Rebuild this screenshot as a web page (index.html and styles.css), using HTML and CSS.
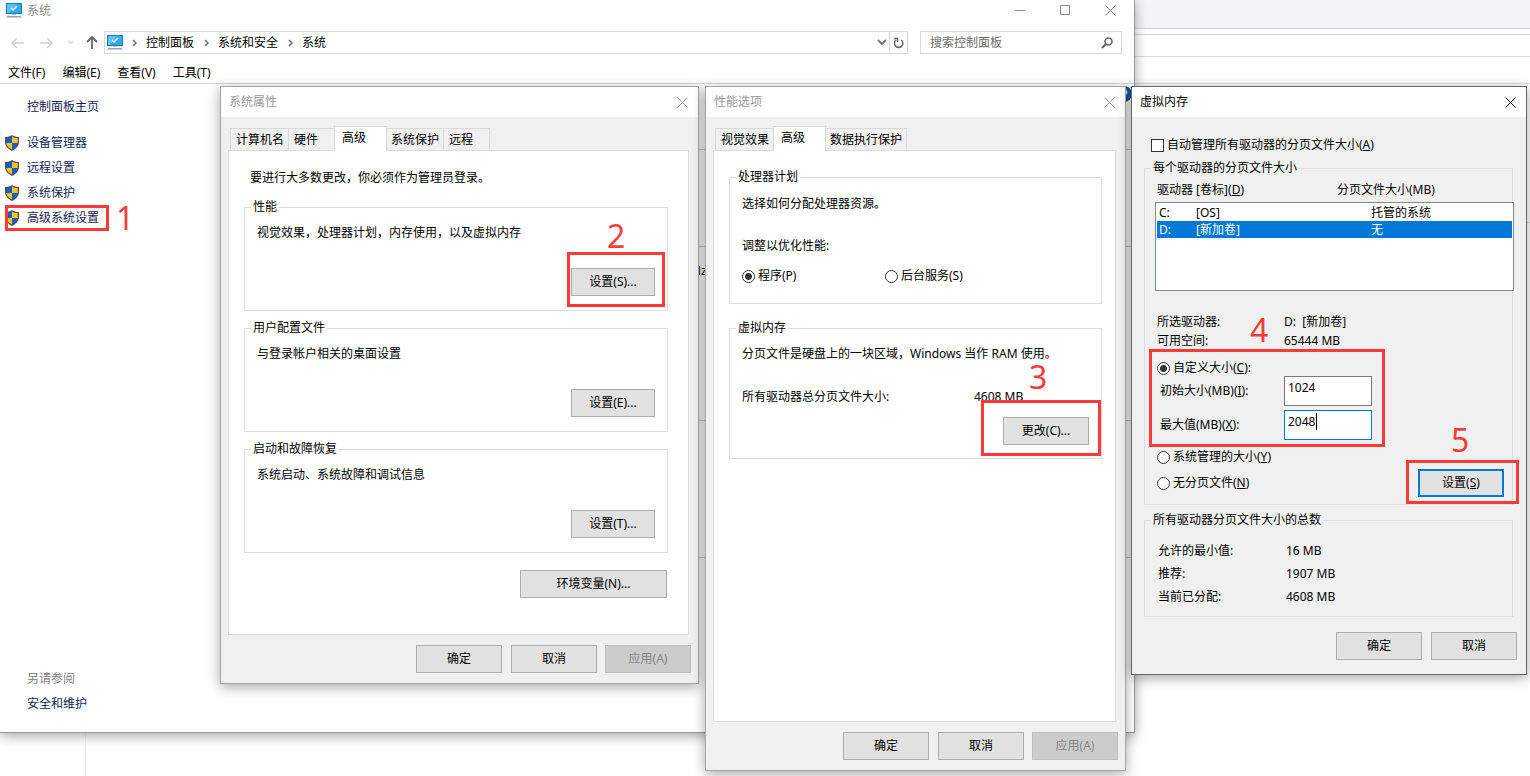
FILE: index.html
```html
<!DOCTYPE html>
<html lang="zh-CN">
<head>
    <meta charset="UTF-8" />
    <title>虚拟内存</title>
    <meta name="viewport" content="width=device-width, initial-scale=1" />
    <link rel="stylesheet" href="styles.css">
</head>
<body>
    <!-- shared icons -->
    <svg class="defs" width="0" height="0" aria-hidden="true">
        <symbol id="monitor" viewBox="0 0 16 15">
            <path d="M0 0h16v11H0z" fill="#1c7cba"/>
            <path d="M1 1h14v9H1z" fill="#2fa9f0"/>
            <path d="M1 1h9L3 10H1z" fill="#5cc3fa"/>
            <path d="M5 5l2 2 4-4" fill="none" stroke="#fff" stroke-width="1.5"/>
            <path d="M6 11h4v1H6z" fill="#b9c4cc"/>
            <path d="M1 13h14v1H1z" fill="#8fa3b1"/>
            <path d="M0 14h16v1H0z" fill="#c5d0d8"/>
        </symbol>
        <symbol id="shield" viewBox="0 0 14 16">
            <path d="M7 0C5 1.600 2.500 2 0 2v5c0 4 3 7 7 9 4-2 7-5 7-9V2C11.500 2 9 1.600 7 0z" fill="#4d4d4d"/>
            <path d="M7 1.500C5.200 2.700 3.200 3.100 1.200 3.100V8H7z" fill="#0f63c4"/>
            <path d="M7 1.500c1.800 1.200 3.800 1.600 5.800 1.600V8H7z" fill="#fdbf2d"/>
            <path d="M1.200 8H7v6.600C3.800 12.900 1.500 10.600 1.200 8z" fill="#fdbf2d"/>
            <path d="M12.800 8H7v6.600c3.200-1.700 5.500-4 5.800-6.600z" fill="#0f63c4"/>
        </symbol>
        <symbol id="close" viewBox="0 0 11 11">
            <path d="M0.500 0.500l10 10M10.500 0.500l-10 10" fill="none" stroke="currentColor"/>
        </symbol>
        <symbol id="crumb" viewBox="0 0 5 8">
            <path d="M1 1l3 3-3 3" fill="none" stroke="#6b6b6b" stroke-width="1.500"/>
        </symbol>
    </svg>

    <div class="desktop">
        <div class="browser">
            <div class="browser-tabs"></div>
            <div class="browser-address"></div>
            <div class="browser-bar"></div>
            <div class="browser-page"></div>
            <div class="browser-side"></div>
        </div>

        <!-- control panel -->
        <main class="window">
            <header class="window-title">
                <svg class="icon-monitor"><use href="#monitor"/></svg>
                <span>系统</span>
                <div class="window-controls">
                    <button type="button" aria-label="最小化"><svg width="11" height="11"><path d="M0 5.500h10" stroke="currentColor"/></svg></button>
                    <button type="button" aria-label="最大化"><svg width="11" height="11"><path d="M0.500 0.500h9v9h-9z" fill="none" stroke="currentColor"/></svg></button>
                    <button type="button" aria-label="关闭"><svg width="11" height="11"><use href="#close"/></svg></button>
                </div>
            </header>
            <div class="toolbar">
                <nav class="history">
                    <button type="button" aria-label="后退" disabled><svg width="13" height="12"><path d="M6 1L1 6l5 5M1 6h12" fill="none" stroke="#d0d0d0" stroke-width="1.500"/></svg></button>
                    <button type="button" aria-label="前进" disabled><svg width="13" height="12"><path d="M7 1l5 5-5 5M12 6H0" fill="none" stroke="#d0d0d0" stroke-width="1.500"/></svg></button>
                    <button type="button" aria-label="最近" disabled><svg width="7" height="5"><path d="M1 1l2.500 2.500L6 1" fill="none" stroke="#cfcfcf" stroke-width="1.200"/></svg></button>
                    <button type="button" aria-label="向上"><svg width="12" height="13"><path d="M1 6l5-5 5 5M6 1v12" fill="none" stroke="#666" stroke-width="1.800"/></svg></button>
                </nav>
                <div class="address">
                    <svg class="icon-monitor"><use href="#monitor"/></svg>
                    <svg class="icon-crumb"><use href="#crumb"/></svg>
                    <a href="#">控制面板</a>
                    <svg class="icon-crumb"><use href="#crumb"/></svg>
                    <a href="#">系统和安全</a>
                    <svg class="icon-crumb"><use href="#crumb"/></svg>
                    <a href="#">系统</a>
                    <button class="address-drop" type="button" aria-label="历史记录"><svg width="10" height="7"><path d="M1 1l4 4 4-4" fill="none" stroke="#777" stroke-width="1.800"/></svg></button>
                    <button class="address-reload" type="button" aria-label="刷新"><svg width="11" height="12"><path d="M8.300 3a4.200 4.200 0 1 1-5.300 0M1 1.500h3.500V5" fill="none" stroke="#666" stroke-width="1.500"/></svg></button>
                </div>
                <div class="search">
                    <input type="search" placeholder="搜索控制面板" aria-label="搜索控制面板">
                    <svg width="12" height="12"><circle cx="7.500" cy="4.500" r="3.500" fill="none" stroke="#666" stroke-width="1.600"/><path d="M5 7L1 11" stroke="#666" stroke-width="2"/></svg>
                </div>
            </div>
            <nav class="menu">
                <a href="#">文件(F)</a>
                <a href="#">编辑(E)</a>
                <a href="#">查看(V)</a>
                <a href="#">工具(T)</a>
            </nav>
            <div class="window-body">
                <aside class="sidebar">
                    <a class="home" href="#">控制面板主页</a>
                    <a class="task" href="#"><svg><use href="#shield"/></svg>设备管理器</a>
                    <a class="task" href="#"><svg><use href="#shield"/></svg>远程设置</a>
                    <a class="task" href="#"><svg><use href="#shield"/></svg>系统保护</a>
                    <a class="task" href="#"><svg><use href="#shield"/></svg>高级系统设置</a>
                    <div class="see-also">
                        <span>另请参阅</span>
                        <a href="#">安全和维护</a>
                    </div>
                </aside>
                <div class="system-info">
                    <section class="info-head">
                        <svg width="16" height="16"><circle cx="8" cy="8" r="8" fill="#0a5ba8"/><path d="M5.500 6a2.500 2.500 0 1 1 3.500 2.300Q8 8.700 8 10M8 11.500v1.500" fill="none" stroke="#fff" stroke-width="1.500"/></svg>
                    </section>
                    <section class="info-edition"></section>
                    <section class="info-system">Hz</section>
                    <section class="info-name"></section>
                    <section class="info-license"></section>
                </div>
            </div>
        </main>

        <!-- system properties -->
        <section class="dialog properties">
            <header class="dialog-title">
                <span>系统属性</span>
                <button type="button" aria-label="关闭"><svg width="11" height="11"><use href="#close"/></svg></button>
            </header>
            <div class="tabs">
                <button type="button">计算机名</button>
                <button type="button">硬件</button>
                <button type="button" class="active">高级</button>
                <button type="button">系统保护</button>
                <button type="button">远程</button>
            </div>
            <div class="panel">
                <p class="intro">要进行大多数更改，你必须作为管理员登录。</p>
                <fieldset>
                    <legend>性能</legend>
                    <p>视觉效果，处理器计划，内存使用，以及虚拟内存</p>
                    <button class="btn" type="button">设置(S)...</button>
                </fieldset>
                <fieldset>
                    <legend>用户配置文件</legend>
                    <p>与登录帐户相关的桌面设置</p>
                    <button class="btn" type="button">设置(E)...</button>
                </fieldset>
                <fieldset>
                    <legend>启动和故障恢复</legend>
                    <p>系统启动、系统故障和调试信息</p>
                    <button class="btn" type="button">设置(T)...</button>
                </fieldset>
                <button class="btn env" type="button">环境变量(N)...</button>
            </div>
            <footer class="actions">
                <button class="btn" type="button">确定</button>
                <button class="btn" type="button">取消</button>
                <button class="btn" type="button" disabled>应用(A)</button>
            </footer>
        </section>

        <!-- performance options -->
        <section class="dialog performance">
            <header class="dialog-title">
                <span>性能选项</span>
                <button type="button" aria-label="关闭"><svg width="11" height="11"><use href="#close"/></svg></button>
            </header>
            <div class="tabs">
                <button type="button">视觉效果</button>
                <button type="button" class="active">高级</button>
                <button type="button">数据执行保护</button>
            </div>
            <div class="panel">
                <fieldset class="scheduling">
                    <legend>处理器计划</legend>
                    <p>选择如何分配处理器资源。</p>
                    <p>调整以优化性能:</p>
                    <div class="choices">
                        <label><input type="radio" name="optimize" checked>程序(P)</label>
                        <label><input type="radio" name="optimize">后台服务(S)</label>
                    </div>
                </fieldset>
                <fieldset class="paging">
                    <legend>虚拟内存</legend>
                    <p>分页文件是硬盘上的一块区域，Windows 当作 RAM 使用。</p>
                    <dl class="pair">
                        <dt>所有驱动器总分页文件大小:</dt>
                        <dd>4608 MB</dd>
                    </dl>
                    <button class="btn" type="button">更改(C)...</button>
                </fieldset>
            </div>
            <footer class="actions">
                <button class="btn" type="button">确定</button>
                <button class="btn" type="button">取消</button>
                <button class="btn" type="button" disabled>应用(A)</button>
            </footer>
        </section>

        <!-- virtual memory -->
        <section class="dialog memory">
            <header class="dialog-title">
                <span>虚拟内存</span>
                <button type="button" aria-label="关闭"><svg width="11" height="11"><use href="#close"/></svg></button>
            </header>
            <form class="memory-form">
                <label class="auto"><input type="checkbox"><span>自动管理所有驱动器的分页文件大小(<u>A</u>)</span></label>
                <fieldset class="drives">
                    <legend>每个驱动器的分页文件大小</legend>
                    <div class="list-head">
                        <span>驱动器 [卷标](<u>D</u>)</span>
                        <span>分页文件大小(MB)</span>
                    </div>
                    <div class="list">
                        <table aria-label="驱动器">
                            <tr><td class="letter">C:</td><td class="volume">[OS]</td><td>托管的系统</td></tr>
                            <tr class="selected"><td class="letter">D:</td><td class="volume">[新加卷]</td><td>无</td></tr>
                        </table>
                    </div>
                    <dl class="pair drive-info">
                        <dt>所选驱动器:</dt>
                        <dd>D:&nbsp; [新加卷]</dd>
                        <dt>可用空间:</dt>
                        <dd>65444 MB</dd>
                    </dl>
                    <label class="custom"><input type="radio" name="size" checked><span>自定义大小(<u>C</u>):</span></label>
                    <div class="size-row">
                        <label for="initial"><span>初始大小(MB)(<u>I</u>):</span></label>
                        <input id="initial" type="text" value="1024">
                    </div>
                    <div class="size-row">
                        <label for="maximum"><span>最大值(MB)(<u>X</u>):</span></label>
                        <div class="focused">
                            <input id="maximum" type="text" value="2048">
                            <span class="caret"></span>
                        </div>
                    </div>
                    <div class="size-set">
                        <div class="size-choices">
                            <label><input type="radio" name="size"><span>系统管理的大小(<u>Y</u>)</span></label>
                            <label><input type="radio" name="size"><span>无分页文件(<u>N</u>)</span></label>
                        </div>
                        <button class="btn default" type="button">设置(<u>S</u>)</button>
                    </div>
                </fieldset>
                <fieldset class="totals">
                    <legend>所有驱动器分页文件大小的总数</legend>
                    <dl class="pair">
                        <dt>允许的最小值:</dt>
                        <dd>16 MB</dd>
                        <dt>推荐:</dt>
                        <dd>1907 MB</dd>
                        <dt>当前已分配:</dt>
                        <dd>4608 MB</dd>
                    </dl>
                </fieldset>
            </form>
            <footer class="actions">
                <button class="btn" type="button">确定</button>
                <button class="btn" type="button">取消</button>
            </footer>
        </section>

        <!-- step markers -->
        <div class="mark mark-1"></div><span class="step step-1">1</span>
        <div class="mark mark-2"></div><span class="step step-2">2</span>
        <div class="mark mark-3"></div><span class="step step-3">3</span>
        <div class="mark mark-4"></div><span class="step step-4">4</span>
        <div class="mark mark-5"></div><span class="step step-5">5</span>
    </div>
</body>
</html>
```
FILE: styles.css
```css
* {
    box-sizing: border-box;
}
body {
    margin: 0;
    font: 12px/16px "Noto Sans", "Noto Sans CJK SC", sans-serif;
    color: #000;
    background: #fff;
}
button, input {
    font: inherit;
    color: inherit;
    margin: 0;
    padding: 0;
}
p, dl, dd {
    margin: 0;
}
a {
    color: inherit;
    text-decoration: none;
}
svg {
    display: block;
    flex: none;
}
.defs {
    position: absolute;
}
.desktop {
    position: relative;
    min-height: 100vh;
    overflow: hidden;
}

/* Browser behind everything */
.browser {
    position: absolute;
    inset: 0;
    display: flex;
    flex-direction: column;
}
.browser-tabs {
    height: 28px;
    background: #f3f4f6;
}
.browser-address {
    height: 7px;
    border-top: 1px solid #d6d6d6;
    border-bottom: 1px solid #d6d6d6;
}
.browser-bar {
    height: 22px;
    border-bottom: 1px solid #dcdcdc;
}
.browser-page {
    height: 166px;
    border-bottom: 1px solid #dcdcdc;
    background: linear-gradient(#e0e0e0, #e0e0e0) 0 26px / 100% 1px no-repeat;
}
.browser-side {
    flex: 1;
    width: 86px;
    border-right: 1px solid #f0f0f0;
}

/* Control panel window */
.window {
    position: absolute;
    inset: 0 395px 43px 0;
    display: flex;
    flex-direction: column;
    background: #fff;
    border-right: 1px solid #999;
    border-bottom: 1px solid #999;
    box-shadow: 0 3px 12px rgba(0, 0, 0, 0.35);
}
.window-title {
    display: flex;
    align-items: center;
    gap: 5px;
    height: 21px;
    padding: 0 18px 0 6px;
    color: #8c8c8c;
}
.icon-monitor {
    width: 16px;
    height: 15px;
}
.window-controls {
    display: flex;
    gap: 34px;
    margin-left: auto;
}
.window-controls button, .dialog-title button, .history button, .address button {
    border: none;
    background: none;
}
.toolbar {
    display: flex;
    align-items: center;
    gap: 12px;
    margin-top: 10px;
    padding-right: 12px;
}
.history {
    display: flex;
    align-items: center;
    width: 92px;
    padding-left: 11px;
    gap: 16px;
}
.history button:nth-child(3) {
    margin: 0 -4px 0 -2px;
}
.address {
    display: flex;
    align-items: center;
    flex: 1;
    gap: 9px;
    height: 23px;
    padding-left: 2px;
    border: 1px solid #d9d9d9;
}
.address a {
    margin-right: 1px;
}
.icon-crumb {
    width: 5px;
    height: 8px;
}
.address-drop {
    margin-left: auto;
    margin-right: -7px;
}
.address-reload {
    display: flex;
    align-items: center;
    height: 21px;
    padding: 0 3px;
}
.address .address-reload {
    border-left: 1px solid #d9d9d9;
}
.search {
    display: flex;
    align-items: center;
    width: 202px;
    height: 23px;
    padding: 0 8px 0 9px;
    border: 1px solid #d9d9d9;
}
.search input {
    flex: 1;
    min-width: 0;
    border: none;
    outline: none;
    background: none;
}
.search input::placeholder {
    color: #6d6d6d;
}
.menu {
    display: flex;
    gap: 17px;
    height: 30px;
    padding: 11px 8px 0;
    border-bottom: 1px solid #d9d9d9;
}
.window-body {
    display: flex;
    flex: 1;
}
.sidebar {
    display: flex;
    flex-direction: column;
    width: 220px;
    padding: 15px 5px 20px;
    color: #151c55;
}
.home {
    margin: 0 0 20px 22px;
}
.task {
    display: flex;
    align-items: center;
    gap: 8px;
    margin-bottom: 9px;
}
.task svg {
    width: 14px;
    height: 16px;
}
.see-also {
    display: flex;
    flex-direction: column;
    gap: 9px;
    margin-top: auto;
    padding-left: 22px;
}
.see-also span {
    color: #808080;
}
.system-info {
    flex: 1;
}
.system-info section {
    border-bottom: 1px solid #ccc;
}
.info-head {
    display: flex;
    justify-content: flex-end;
    height: 66px;
    padding: 2px 2px 0 0;
}
.info-edition {
    height: 97px;
}
.info-system {
    height: 174px;
    padding: 16px 0 0 472px;
}
.info-name {
    height: 137px;
}
.system-info .info-license {
    border: none;
}

/* Dialogs */
.dialog {
    position: absolute;
    top: 86px;
    background: #f0f0f0;
    border: 1px solid #a6a6a6;
    box-shadow: 0 3px 12px rgba(0, 0, 0, 0.35);
}
.properties {
    left: 220px;
    width: 479px;
}
.performance {
    left: 705px;
    width: 421px;
}
.memory {
    left: 1131px;
    width: 396px;
    border-color: #666;
}
.dialog-title {
    display: flex;
    align-items: center;
    justify-content: space-between;
    height: 30px;
    padding: 0 10px 0 8px;
    background: #fff;
    color: #999;
}
.memory .dialog-title {
    color: #000;
}
.tabs {
    display: flex;
    align-items: flex-end;
    height: 33px;
    padding-left: 10px;
}
.tabs button {
    height: 22px;
    min-width: 47px;
    margin-left: -1px;
    padding: 0 4px 0 5px;
    text-align: left;
    background: #f0f0f0;
    border: 1px solid #d9d9d9;
    border-bottom: none;
}
.tabs .active {
    position: relative;
    z-index: 1;
    height: 25px;
    min-width: 53px;
    margin-bottom: -1px;
    padding: 0 7px 2px;
    background: #fff;
}
/* the tab after the active one sits partly under it */
.tabs .active + button {
    padding-left: 4px;
}
.panel {
    display: flex;
    flex-direction: column;
    gap: 9px;
    margin: 0 9px 0 7px;
    padding: 19px 20px 36px 15px;
    background: #fff;
    border: 1px solid #dcdcdc;
}
.intro {
    padding: 0 0 4px 6px;
}
fieldset {
    display: flex;
    flex-direction: column;
    min-width: 0;
    margin: 0;
    padding: 10px 12px 14px;
    border: 1px solid #dcdcdc;
}
legend {
    margin-left: -6px;
    padding: 0 2px;
    height: 16px;
}
.btn {
    width: 86px;
    height: 28px;
    background: #e1e1e1;
    border: 1px solid #adadad;
}
.btn:disabled {
    background: #ccc;
    border-color: #bfbfbf;
    color: #838383;
}
.btn.default {
    border: 2px solid #0078d7;
}
.properties fieldset .btn {
    align-self: flex-end;
    width: 84px;
    margin-top: 27px;
}
.panel .env {
    align-self: flex-end;
    width: 147px;
    margin: 8px 1px 0 0;
}
.actions {
    display: flex;
    justify-content: flex-end;
    gap: 9px;
    padding: 10px 7px 10px;
}
.actions .btn:disabled {
    margin-left: -1px;
}
label {
    display: flex;
    align-items: center;
    gap: 3px;
}
input[type="radio"], input[type="checkbox"] {
    appearance: none;
    flex: none;
    width: 13px;
    height: 13px;
    background: #fff;
    border: 1px solid #333;
}
input[type="radio"] {
    border-radius: 50%;
}
input[type="radio"]:checked {
    background: radial-gradient(circle, #333 3px, #fff 4px);
}
.pair {
    display: grid;
}

/* Performance options */
.performance .panel {
    gap: 16px;
    min-height: 572px;
    padding: 18px 13px 0 15px;
}
.scheduling {
    padding-top: 11px;
    padding-bottom: 19px;
}
.scheduling p {
    margin-bottom: 26px;
}
.scheduling p + p {
    margin-bottom: 14px;
}
.choices {
    display: grid;
    grid-template-columns: 143px 1fr;
}
.paging {
    padding-bottom: 13px;
}
.paging .pair {
    grid-template-columns: 232px 1fr;
    margin: 27px 0 12px;
}
.paging .btn {
    align-self: flex-end;
}

/* Virtual memory */
.memory-form {
    display: flex;
    flex-direction: column;
    gap: 7px;
    padding: 20px 13px 0 12px;
}
.auto {
    padding-left: 7px;
}
.drives {
    padding: 6px 8px 7px 12px;
}
.list-head {
    display: grid;
    grid-template-columns: 180px 1fr;
}
.list {
    height: 89px;
    margin: 4px -10px 23px -2px;
    padding: 1px;
    background: #fff;
    border: 1px solid #828790;
}
.list table {
    width: 100%;
    border-collapse: collapse;
}
.list td {
    height: 17px;
    padding: 0 0 0 2px;
}
.list .letter {
    width: 37px;
}
.list .volume {
    width: 175px;
}
.list .selected {
    background: #0078d7;
    color: #fff;
}
.drive-info {
    grid-template-columns: 127px 1fr;
    row-gap: 3px;
    margin-bottom: 11px;
}
.size-row {
    display: grid;
    grid-template-columns: 124px 88px;
    padding-left: 3px;
    margin-bottom: 4px;
}
.size-row input {
    width: 100%;
    height: 30px;
    padding: 2px 3px 10px;
    background: #fff;
    border: 1px solid #7a7a7a;
    outline: none;
}
.focused {
    position: relative;
}
.size-row .focused input {
    border-color: #0078d7;
}
.caret {
    position: absolute;
    left: 32px;
    top: 3px;
    width: 1px;
    height: 17px;
    background: #000;
}
.size-set {
    display: flex;
    justify-content: space-between;
    align-items: flex-end;
    margin-top: 5px;
}
.size-choices {
    display: grid;
    gap: 10px;
    padding-bottom: 6px;
}
.totals {
    padding: 15px 12px 11px 13px;
}
.totals .pair {
    grid-template-columns: 128px 1fr;
    row-gap: 7px;
}
.totals legend {
    margin-left: -7px;
}
.memory .actions {
    padding: 15px 9px 14px;
}

/* Step markers */
.mark {
    position: absolute;
    border: 3px solid #fd3a3a;
}
.step {
    position: absolute;
    font-size: 32px;
    line-height: 24px;
    color: #fd3a3a;
}
.mark-1 { left: 5px; top: 205px; width: 104px; height: 26px; }
.mark-2 { left: 567px; top: 252px; width: 98px; height: 55px; }
.mark-3 { left: 981px; top: 400px; width: 120px; height: 56px; }
.mark-4 { left: 1149px; top: 349px; width: 236px; height: 98px; }
.mark-5 { left: 1406px; top: 460px; width: 113px; height: 44px; }
.step-1 { left: 116px; top: 206px; }
.step-2 { left: 607px; top: 224px; }
.step-3 { left: 1029px; top: 365px; }
.step-4 { left: 1250px; top: 318px; }
.step-5 { left: 1451px; top: 428px; }
```
